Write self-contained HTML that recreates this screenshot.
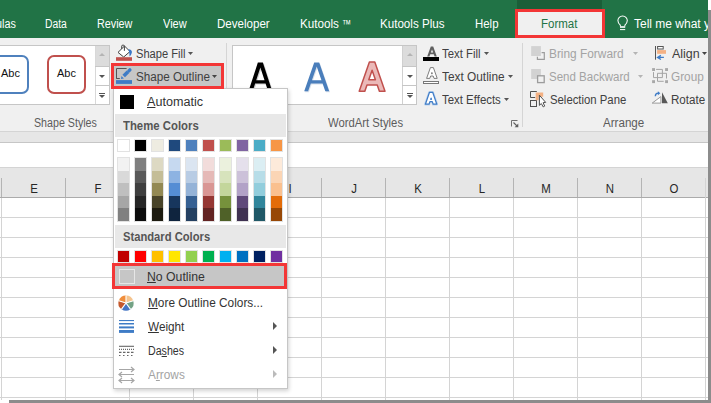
<!DOCTYPE html>
<html><head><meta charset="utf-8">
<style>
html,body{margin:0;padding:0;}
body{width:711px;height:403px;position:relative;overflow:hidden;background:#fff;font-family:"Liberation Sans",sans-serif;}
.a{position:absolute;}
.t{position:absolute;white-space:nowrap;line-height:12px;font-size:12px;transform-origin:0 0;}
.w{color:#fff;}
.d{color:#262626;}
.g{color:#9b9b9b;}
.lbl{color:#5a5a5a;}
svg{position:absolute;overflow:visible;}
</style></head><body>

<!-- ===== TAB BAR ===== -->
<div class="a" style="left:0;top:0;width:711px;height:38px;background:#217346"></div>
<div class="a" style="left:517px;top:0;width:85px;height:10px;background:#1b5e38"></div>
<span class="t w" style="left:-4.5px;top:18px;transform:scaleX(0.9)">ulas</span>
<div class="a" style="left:515px;top:9px;width:84px;height:23px;border:3px solid #f33636;background:#f0f0f0"></div>
<span class="t w" style="left:634px;top:18px">Tell me what you want to do</span>

<svg style="left:616px;top:15px" width="13" height="17">
 <path d="M4.3 11.2 L4.3 10.1 Q1.9 8.2 1.9 5.6 A4.7 4.7 0 1 1 11.3 5.6 Q11.3 8.2 8.9 10.1 L8.9 11.2" stroke="#fff" fill="none" stroke-width="1.05"/>
 <rect x="4" y="11.2" width="5.2" height="1.6" fill="#fff"/>
 <rect x="4" y="14.1" width="5.2" height="1" fill="#fff"/>
</svg>
<!-- ===== RIBBON ===== -->
<div class="a" style="left:0;top:38px;width:711px;height:93px;background:#f0f0f0"></div>


<!-- group separators -->
<div class="a" style="left:226px;top:43px;width:1px;height:84px;background:#d5d5d5"></div>
<div class="a" style="left:522px;top:43px;width:1px;height:84px;background:#d5d5d5"></div>

<!-- Shape styles gallery -->
<div class="a" style="left:-1px;top:45px;width:96px;height:58px;border:1px solid #c6c6c6;background:#fff"></div>
<div class="a" style="left:95px;top:45px;width:14px;height:58px;border:1px solid #c6c6c6;border-left:none;background:#fff"></div>
<div class="a" style="left:95px;top:46px;width:14px;height:20px;background:#dcdcdc"></div>
<div class="a" style="left:95px;top:46px;width:1px;height:58px;background:#d8d8d8"></div>
<div class="a" style="left:95px;top:66px;width:14px;height:1px;background:#c6c6c6"></div>
<div class="a" style="left:95px;top:85px;width:14px;height:1px;background:#c6c6c6"></div>
<svg style="left:95px;top:45px" width="14" height="60">
 <path d="M4 11 L7 8 L10 11 Z" fill="#b4b4b4"/>
 <path d="M4 30 L10 30 L7 33 Z" fill="#555"/>
 <rect x="4" y="48" width="6" height="1" fill="#555"/>
 <path d="M4 50 L10 50 L7 53 Z" fill="#555"/>
</svg>
<div class="a" style="left:-10px;top:55px;width:35px;height:35px;border:2px solid #4f81bd;border-radius:7px"></div>
<div class="a" style="left:47px;top:55px;width:35px;height:35px;border:2px solid #c0504d;border-radius:7px"></div>
<span class="t" style="left:1px;top:67px;font-size:11px;color:#111">Abc</span>
<span class="t" style="left:57px;top:67px;font-size:11px;color:#111">Abc</span>

<!-- Shape fill / outline -->
<svg style="left:116px;top:44px" width="18" height="18">
 <path d="M2,8.4 L8.5,2 L14,7.5 L7.7,13 Z" fill="#fff" stroke="#404040" stroke-width="1" stroke-linejoin="miter"/>
 <path d="M5.7,4.8 L5.7,2.2 Q5.7,1.2 6.7,1.2 L7.4,1.2 Q8.4,1.2 8.4,2.2 L8.4,6.8" stroke="#404040" stroke-width="1" fill="none"/>
 <path d="M12.3,5.2 Q16.3,5.6 15.9,8.6 Q15.5,11 13.5,12.6 Q13.6,10 13.1,7.8 Z" fill="#3a78c8"/>
 <rect x="0" y="13.2" width="16" height="3.6" fill="#c0504d"/>
</svg>
<svg style="left:188px;top:52px" width="6" height="4"><path d="M0 0 L5 0 L2.5 3 Z" fill="#555"/></svg>

<div class="a" style="left:111px;top:63px;width:107px;height:20px;border:3px solid #f33636;background:#c6c6c6"></div>
<svg style="left:116px;top:67px" width="17" height="18">
 <path d="M0.5 11.8 L0.5 1.5 L10.6 1.5" stroke="#555" stroke-width="1" fill="none"/>
 <path d="M0.5 11.5 L3.8 11.5" stroke="#555" stroke-width="1" fill="none"/>
 <path d="M7.7 9.1 L12.0 4.8" stroke="#3f7cc6" stroke-width="3.6" fill="none"/>
 <path d="M12.9 3.9 L13.9 2.9" stroke="#3f7cc6" stroke-width="3.4" stroke-linecap="round" fill="none"/>
 <path d="M5.5 9.0 L7.9 11.4 L4.9 12.1 Z" fill="#3f7cc6"/>
 <rect x="0" y="13.1" width="16" height="3.8" fill="#3f7cc6"/>
</svg>
<svg style="left:212px;top:75px" width="6" height="4"><path d="M0 0 L5 0 L2.5 3 Z" fill="#444"/></svg>

<!-- WordArt gallery -->
<div class="a" style="left:232px;top:45px;width:169px;height:58px;border:1px solid #c6c6c6;background:#fff"></div>
<div class="a" style="left:402px;top:45px;width:14px;height:58px;border:1px solid #c6c6c6;border-left:none;background:#fff"></div>
<div class="a" style="left:402px;top:46px;width:14px;height:20px;background:#dcdcdc"></div>
<div class="a" style="left:402px;top:46px;width:1px;height:58px;background:#d0d0d0"></div>
<div class="a" style="left:402px;top:66px;width:14px;height:1px;background:#c6c6c6"></div>
<div class="a" style="left:402px;top:85px;width:14px;height:1px;background:#c6c6c6"></div>
<svg style="left:403px;top:45px" width="14" height="60">
 <path d="M4 11 L7 8 L10 11 Z" fill="#b4b4b4"/>
 <path d="M4 30 L10 30 L7 33 Z" fill="#555"/>
 <rect x="4" y="48" width="6" height="1" fill="#555"/>
 <path d="M4 50 L10 50 L7 53 Z" fill="#555"/>
</svg>
<svg style="left:0;top:0" width="711" height="110">
 <path fill-rule="evenodd" d="M248.50,91.30 L257.85,62.60 L262.85,62.60 L272.20,91.30 L268.10,91.30 L265.56,83.50 L255.14,83.50 L252.60,91.30 Z M256.18,80.30 L260.35,67.51 L264.52,80.30 Z" fill="#777" opacity="0.35" transform="translate(1,1)"/>
 <path fill-rule="evenodd" d="M248.50,91.30 L257.85,62.60 L262.85,62.60 L272.20,91.30 L268.10,91.30 L265.56,83.50 L255.14,83.50 L252.60,91.30 Z M256.18,80.30 L260.35,67.51 L264.52,80.30 Z" fill="#000"/>
 <path fill-rule="evenodd" d="M304.20,91.30 L314.20,62.60 L319.20,62.60 L329.20,91.30 L325.30,91.30 L322.58,83.50 L310.82,83.50 L308.10,91.30 Z M311.93,80.30 L316.70,66.62 L321.47,80.30 Z" fill="#9fb3cc" opacity="0.4" transform="translate(0.8,0.9)"/>
 <path fill-rule="evenodd" d="M304.20,91.30 L314.20,62.60 L319.20,62.60 L329.20,91.30 L325.30,91.30 L322.58,83.50 L310.82,83.50 L308.10,91.30 Z M311.93,80.30 L316.70,66.62 L321.47,80.30 Z" fill="#4a7ebb"/>
 <path fill-rule="evenodd" d="M359.20,91.30 L369.40,62.00 L374.80,62.00 L385.00,91.30 L379.40,91.30 L377.21,85.00 L366.99,85.00 L364.80,91.30 Z M368.80,79.80 L372.10,70.33 L375.40,79.80 Z" fill="#ebb9b8" stroke="#c0504d" stroke-width="1.5" stroke-linejoin="round"/>
</svg>

<!-- Text fill etc -->
<svg style="left:0;top:0" width="460" height="110"><path fill-rule="evenodd" d="M427.20,56.60 L430.80,46.60 L433.20,46.60 L436.80,56.60 L434.60,56.60 L433.74,54.20 L430.26,54.20 L429.40,56.60 Z M430.84,52.60 L432.00,49.38 L433.16,52.60 Z" fill="#606060"/><path fill-rule="evenodd" d="M426.60,78.40 L430.40,67.60 L433.40,67.60 L437.20,78.40 L434.00,78.40 L433.16,76.00 L430.64,76.00 L429.80,78.40 Z M431.42,73.80 L431.90,72.43 L432.38,73.80 Z" fill="#fff" stroke="#707070" stroke-width="0.9" stroke-linejoin="round"/><path fill-rule="evenodd" d="M425.40,104.20 L429.50,92.30 L432.70,92.30 L436.80,104.20 L433.20,104.20 L432.30,101.60 L429.90,101.60 L429.00,104.20 Z M430.69,99.30 L431.10,98.10 L431.51,99.30 Z" fill="none" stroke="#bcd3ee" stroke-width="2.6" stroke-linejoin="round"/><path fill-rule="evenodd" d="M425.40,104.20 L429.50,92.30 L432.70,92.30 L436.80,104.20 L433.20,104.20 L432.30,101.60 L429.90,101.60 L429.00,104.20 Z M430.69,99.30 L431.10,98.10 L431.51,99.30 Z" fill="#fff" stroke="#3f7cc6" stroke-width="1.2" stroke-linejoin="round"/></svg>
<div class="a" style="left:423px;top:57.2px;width:16px;height:3.8px;background:#000"></div>
<svg style="left:484px;top:52px" width="6" height="4"><path d="M0 0 L5 0 L2.5 3 Z" fill="#555"/></svg>
<div class="a" style="left:423px;top:80.5px;width:14px;height:1.6px;border:1px solid #777;background:#fff"></div>
<svg style="left:508px;top:75px" width="6" height="4"><path d="M0 0 L5 0 L2.5 3 Z" fill="#555"/></svg>
<svg style="left:504px;top:98px" width="6" height="4"><path d="M0 0 L5 0 L2.5 3 Z" fill="#555"/></svg>
<svg style="left:510px;top:119px" width="10" height="10"><path d="M1.5 7.5 L1.5 1.5 L7.5 1.5" stroke="#707070" stroke-width="1" fill="none"/><path d="M3.5 3.5 L7 7" stroke="#606060" stroke-width="1.1"/><path d="M8.3 4.6 L8.3 8.3 L4.6 8.3 Z" fill="#606060"/></svg>

<!-- Arrange -->
<svg style="left:530px;top:45px" width="18" height="17">
 <rect x="1.2" y="1.1" width="9.7" height="9.9" fill="#d2d2d2"/>
 <path d="M11.6 7.6 L14.3 7.6 L14.3 14.3 L7.4 14.3 L7.4 11.8" stroke="#9c9c9c" stroke-width="1.2" fill="none"/>
</svg>
<svg style="left:633px;top:52px" width="6" height="4"><path d="M0 0 L5 0 L2.5 3 Z" fill="#b4b4b4"/></svg>
<svg style="left:530px;top:68px" width="18" height="17">
 <rect x="1.2" y="1" width="9.7" height="10" fill="#d2d2d2"/>
 <rect x="7.6" y="7.8" width="6.6" height="6.8" stroke="#9c9c9c" stroke-width="1.3" fill="#f0f0f0"/>
</svg>
<svg style="left:638px;top:75px" width="6" height="4"><path d="M0 0 L5 0 L2.5 3 Z" fill="#b4b4b4"/></svg>
<svg style="left:529px;top:90px" width="18" height="18">
 <path d="M7.8 1.5 L1.5 1.5 L1.5 7.5 L6.2 7.5" stroke="#505050" stroke-width="1" fill="none"/>
 <rect x="1.5" y="10.5" width="6" height="6" stroke="#505050" stroke-width="1" fill="none"/>
 <path d="M6.7 2.6 L14.2 2.6 L14.2 6.8 L9.6 6.8 L9.6 10.3 L6.7 10.3 Z" fill="#f4b183"/>
 <path d="M10.4 5.2 L10.4 15.4 L12.3 13.5 L14.2 16.9 L15.7 16.1 L14.1 12.7 L16.7 12.4 Z" fill="#fff" stroke="#505050" stroke-width="1" stroke-linejoin="round"/>
</svg>

<svg style="left:652px;top:45px" width="18" height="17">
 <path d="M3.5 1 L3.5 14.7" stroke="#555" stroke-width="1"/>
 <rect x="5.6" y="1.5" width="5.6" height="2.5" stroke="#555" stroke-width="1" fill="#fff"/>
 <rect x="5.1" y="5.1" width="8.9" height="3.7" fill="#f4b183"/>
 <path d="M5.6 12.4 L11.9 12.4 M8.9 10.3 L5.6 12.4 L8.9 14.5" stroke="#3f7cc6" stroke-width="1.4" fill="none"/>
</svg>
<svg style="left:702px;top:52px" width="6" height="4"><path d="M0 0 L5 0 L2.5 3 Z" fill="#444"/></svg>
<svg style="left:651px;top:67px" width="18" height="17">
 <rect x="1.1" y="1.1" width="2.9" height="2.9" fill="#a8a8a8"/><rect x="14.1" y="1.1" width="2.9" height="2.9" fill="#a8a8a8"/>
 <rect x="1.1" y="13.2" width="2.9" height="2.9" fill="#a8a8a8"/><rect x="14.1" y="13.2" width="2.9" height="2.9" fill="#a8a8a8"/>
 <path d="M5.1 2.4 H11.4 V10.6 M2.5 5.1 V10.6 H11.4 M6.5 14.3 V6.3 H15.5 V11.5 M6.5 14.3 H12.7" stroke="#a4a4a4" stroke-width="1" fill="none"/>
</svg>
<svg style="left:651px;top:90px" width="18" height="16">
 <path d="M1.2 13.1 L9.9 6.6 L9.9 13.1 Z" stroke="#9a9a9a" stroke-width="1" fill="#fff" stroke-linejoin="round"/>
 <path d="M11 13.2 L11 2.3 L16.8 13.2 Z" fill="#585858"/>
 <path d="M4.3 6.3 Q4.3 3.4 7.2 3.2" stroke="#3f7cc6" stroke-width="1.3" fill="none"/>
 <path d="M6.9 1.2 L9.3 3.2 L6.9 5.2 Z" fill="#3f7cc6"/>
</svg>

<!-- below ribbon -->
<div class="a" style="left:0;top:131px;width:711px;height:1px;background:#d4d4d4"></div>
<div class="a" style="left:0;top:132px;width:711px;height:10px;background:#e6e6e6"></div>
<div class="a" style="left:0;top:142px;width:711px;height:1px;background:#c6c6c6"></div>
<div class="a" style="left:0;top:143px;width:711px;height:24px;background:#fff"></div>
<div class="a" style="left:0;top:167px;width:711px;height:1px;background:#d4d4d4"></div>
<div class="a" style="left:0;top:168px;width:711px;height:29px;background:#e6e6e6"></div>
<div class="a" style="left:0;top:197px;width:711px;height:1px;background:#ababab"></div>
<div class="a" style="left:1px;top:178px;width:1px;height:19px;background:#b4b4b4"></div>
<span class="t d" style="left:2px;width:64px;text-align:center;top:182px;font-size:13px;line-height:13px;transform:scaleX(0.88);transform-origin:50% 0">E</span>
<div class="a" style="left:1px;top:198px;width:1px;height:202px;background:#d4d4d4"></div>
<div class="a" style="left:65px;top:178px;width:1px;height:19px;background:#b4b4b4"></div>
<span class="t d" style="left:66px;width:64px;text-align:center;top:182px;font-size:13px;line-height:13px;transform:scaleX(0.88);transform-origin:50% 0">F</span>
<div class="a" style="left:65px;top:198px;width:1px;height:202px;background:#d4d4d4"></div>
<div class="a" style="left:129px;top:178px;width:1px;height:19px;background:#b4b4b4"></div>
<span class="t d" style="left:130px;width:64px;text-align:center;top:182px;font-size:13px;line-height:13px;transform:scaleX(0.88);transform-origin:50% 0">G</span>
<div class="a" style="left:129px;top:198px;width:1px;height:202px;background:#d4d4d4"></div>
<div class="a" style="left:193px;top:178px;width:1px;height:19px;background:#b4b4b4"></div>
<span class="t d" style="left:194px;width:64px;text-align:center;top:182px;font-size:13px;line-height:13px;transform:scaleX(0.88);transform-origin:50% 0">H</span>
<div class="a" style="left:193px;top:198px;width:1px;height:202px;background:#d4d4d4"></div>
<div class="a" style="left:257px;top:178px;width:1px;height:19px;background:#b4b4b4"></div>
<span class="t d" style="left:258px;width:64px;text-align:center;top:182px;font-size:13px;line-height:13px;transform:scaleX(0.88);transform-origin:50% 0">I</span>
<div class="a" style="left:257px;top:198px;width:1px;height:202px;background:#d4d4d4"></div>
<div class="a" style="left:321px;top:178px;width:1px;height:19px;background:#b4b4b4"></div>
<span class="t d" style="left:322px;width:64px;text-align:center;top:182px;font-size:13px;line-height:13px;transform:scaleX(0.88);transform-origin:50% 0">J</span>
<div class="a" style="left:321px;top:198px;width:1px;height:202px;background:#d4d4d4"></div>
<div class="a" style="left:385px;top:178px;width:1px;height:19px;background:#b4b4b4"></div>
<span class="t d" style="left:386px;width:64px;text-align:center;top:182px;font-size:13px;line-height:13px;transform:scaleX(0.88);transform-origin:50% 0">K</span>
<div class="a" style="left:385px;top:198px;width:1px;height:202px;background:#d4d4d4"></div>
<div class="a" style="left:449px;top:178px;width:1px;height:19px;background:#b4b4b4"></div>
<span class="t d" style="left:450px;width:64px;text-align:center;top:182px;font-size:13px;line-height:13px;transform:scaleX(0.88);transform-origin:50% 0">L</span>
<div class="a" style="left:449px;top:198px;width:1px;height:202px;background:#d4d4d4"></div>
<div class="a" style="left:513px;top:178px;width:1px;height:19px;background:#b4b4b4"></div>
<span class="t d" style="left:514px;width:64px;text-align:center;top:182px;font-size:13px;line-height:13px;transform:scaleX(0.88);transform-origin:50% 0">M</span>
<div class="a" style="left:513px;top:198px;width:1px;height:202px;background:#d4d4d4"></div>
<div class="a" style="left:577px;top:178px;width:1px;height:19px;background:#b4b4b4"></div>
<span class="t d" style="left:578px;width:64px;text-align:center;top:182px;font-size:13px;line-height:13px;transform:scaleX(0.88);transform-origin:50% 0">N</span>
<div class="a" style="left:577px;top:198px;width:1px;height:202px;background:#d4d4d4"></div>
<div class="a" style="left:641px;top:178px;width:1px;height:19px;background:#b4b4b4"></div>
<span class="t d" style="left:642px;width:64px;text-align:center;top:182px;font-size:13px;line-height:13px;transform:scaleX(0.88);transform-origin:50% 0">O</span>
<div class="a" style="left:641px;top:198px;width:1px;height:202px;background:#d4d4d4"></div>
<div class="a" style="left:705px;top:178px;width:1px;height:222px;background:#d4d4d4"></div>
<div class="a" style="left:0;top:217px;width:708px;height:1px;background:#d4d4d4"></div>
<div class="a" style="left:0;top:237px;width:708px;height:1px;background:#d4d4d4"></div>
<div class="a" style="left:0;top:257px;width:708px;height:1px;background:#d4d4d4"></div>
<div class="a" style="left:0;top:277px;width:708px;height:1px;background:#d4d4d4"></div>
<div class="a" style="left:0;top:297px;width:708px;height:1px;background:#d4d4d4"></div>
<div class="a" style="left:0;top:317px;width:708px;height:1px;background:#d4d4d4"></div>
<div class="a" style="left:0;top:337px;width:708px;height:1px;background:#d4d4d4"></div>
<div class="a" style="left:0;top:357px;width:708px;height:1px;background:#d4d4d4"></div>
<div class="a" style="left:0;top:377px;width:708px;height:1px;background:#d4d4d4"></div>
<div class="a" style="left:0;top:397px;width:708px;height:1px;background:#d4d4d4"></div>


<!-- ===== MENU ===== -->
<div class="a" style="left:113px;top:88px;width:173px;height:299px;border:1px solid #c6c6c6;background:#fff;box-shadow:1px 2px 4px rgba(0,0,0,0.18)"></div>
<div class="a" style="left:120px;top:95px;width:14px;height:14px;background:#000"></div>
<div class="a" style="left:115px;top:114px;width:171px;height:23px;background:#e8e8e8"></div>
<div class="a" style="left:115px;top:225px;width:171px;height:23px;background:#e8e8e8"></div>
<div class="a" style="left:117px;top:139px;width:11px;height:11px;border:1px solid #e2e2e2;background:#FFFFFF"></div>
<div class="a" style="left:117px;top:157px;width:11px;height:63px;border:1px solid #e2e2e2"></div>
<div class="a" style="left:118px;top:158.0px;width:11px;height:12.6px;background:#F2F2F2"></div>
<div class="a" style="left:118px;top:170.6px;width:11px;height:12.6px;background:#D9D9D9"></div>
<div class="a" style="left:118px;top:183.2px;width:11px;height:12.6px;background:#BFBFBF"></div>
<div class="a" style="left:118px;top:195.8px;width:11px;height:12.6px;background:#A6A6A6"></div>
<div class="a" style="left:118px;top:208.4px;width:11px;height:12.6px;background:#808080"></div>
<div class="a" style="left:134px;top:139px;width:11px;height:11px;border:1px solid #e2e2e2;background:#000000"></div>
<div class="a" style="left:134px;top:157px;width:11px;height:63px;border:1px solid #e2e2e2"></div>
<div class="a" style="left:135px;top:158.0px;width:11px;height:12.6px;background:#7F7F7F"></div>
<div class="a" style="left:135px;top:170.6px;width:11px;height:12.6px;background:#595959"></div>
<div class="a" style="left:135px;top:183.2px;width:11px;height:12.6px;background:#3F3F3F"></div>
<div class="a" style="left:135px;top:195.8px;width:11px;height:12.6px;background:#262626"></div>
<div class="a" style="left:135px;top:208.4px;width:11px;height:12.6px;background:#0C0C0C"></div>
<div class="a" style="left:151px;top:139px;width:11px;height:11px;border:1px solid #e2e2e2;background:#EEECE1"></div>
<div class="a" style="left:151px;top:157px;width:11px;height:63px;border:1px solid #e2e2e2"></div>
<div class="a" style="left:152px;top:158.0px;width:11px;height:12.6px;background:#DDD9C3"></div>
<div class="a" style="left:152px;top:170.6px;width:11px;height:12.6px;background:#C4BD97"></div>
<div class="a" style="left:152px;top:183.2px;width:11px;height:12.6px;background:#938953"></div>
<div class="a" style="left:152px;top:195.8px;width:11px;height:12.6px;background:#494429"></div>
<div class="a" style="left:152px;top:208.4px;width:11px;height:12.6px;background:#1D1B10"></div>
<div class="a" style="left:168px;top:139px;width:11px;height:11px;border:1px solid #e2e2e2;background:#1F497D"></div>
<div class="a" style="left:168px;top:157px;width:11px;height:63px;border:1px solid #e2e2e2"></div>
<div class="a" style="left:169px;top:158.0px;width:11px;height:12.6px;background:#C6D9F0"></div>
<div class="a" style="left:169px;top:170.6px;width:11px;height:12.6px;background:#8DB3E2"></div>
<div class="a" style="left:169px;top:183.2px;width:11px;height:12.6px;background:#548DD4"></div>
<div class="a" style="left:169px;top:195.8px;width:11px;height:12.6px;background:#17365D"></div>
<div class="a" style="left:169px;top:208.4px;width:11px;height:12.6px;background:#0F243E"></div>
<div class="a" style="left:185px;top:139px;width:11px;height:11px;border:1px solid #e2e2e2;background:#4F81BD"></div>
<div class="a" style="left:185px;top:157px;width:11px;height:63px;border:1px solid #e2e2e2"></div>
<div class="a" style="left:186px;top:158.0px;width:11px;height:12.6px;background:#DBE5F1"></div>
<div class="a" style="left:186px;top:170.6px;width:11px;height:12.6px;background:#B8CCE4"></div>
<div class="a" style="left:186px;top:183.2px;width:11px;height:12.6px;background:#95B3D7"></div>
<div class="a" style="left:186px;top:195.8px;width:11px;height:12.6px;background:#366092"></div>
<div class="a" style="left:186px;top:208.4px;width:11px;height:12.6px;background:#244061"></div>
<div class="a" style="left:202px;top:139px;width:11px;height:11px;border:1px solid #e2e2e2;background:#C0504D"></div>
<div class="a" style="left:202px;top:157px;width:11px;height:63px;border:1px solid #e2e2e2"></div>
<div class="a" style="left:203px;top:158.0px;width:11px;height:12.6px;background:#F2DCDB"></div>
<div class="a" style="left:203px;top:170.6px;width:11px;height:12.6px;background:#E5B9B7"></div>
<div class="a" style="left:203px;top:183.2px;width:11px;height:12.6px;background:#D99694"></div>
<div class="a" style="left:203px;top:195.8px;width:11px;height:12.6px;background:#953734"></div>
<div class="a" style="left:203px;top:208.4px;width:11px;height:12.6px;background:#632423"></div>
<div class="a" style="left:219px;top:139px;width:11px;height:11px;border:1px solid #e2e2e2;background:#9BBB59"></div>
<div class="a" style="left:219px;top:157px;width:11px;height:63px;border:1px solid #e2e2e2"></div>
<div class="a" style="left:220px;top:158.0px;width:11px;height:12.6px;background:#EBF1DD"></div>
<div class="a" style="left:220px;top:170.6px;width:11px;height:12.6px;background:#D7E3BC"></div>
<div class="a" style="left:220px;top:183.2px;width:11px;height:12.6px;background:#C3D69B"></div>
<div class="a" style="left:220px;top:195.8px;width:11px;height:12.6px;background:#76923C"></div>
<div class="a" style="left:220px;top:208.4px;width:11px;height:12.6px;background:#4F6128"></div>
<div class="a" style="left:236px;top:139px;width:11px;height:11px;border:1px solid #e2e2e2;background:#8064A2"></div>
<div class="a" style="left:236px;top:157px;width:11px;height:63px;border:1px solid #e2e2e2"></div>
<div class="a" style="left:237px;top:158.0px;width:11px;height:12.6px;background:#E5E0EC"></div>
<div class="a" style="left:237px;top:170.6px;width:11px;height:12.6px;background:#CCC1D9"></div>
<div class="a" style="left:237px;top:183.2px;width:11px;height:12.6px;background:#B2A2C7"></div>
<div class="a" style="left:237px;top:195.8px;width:11px;height:12.6px;background:#5F497A"></div>
<div class="a" style="left:237px;top:208.4px;width:11px;height:12.6px;background:#3F3151"></div>
<div class="a" style="left:253px;top:139px;width:11px;height:11px;border:1px solid #e2e2e2;background:#4BACC6"></div>
<div class="a" style="left:253px;top:157px;width:11px;height:63px;border:1px solid #e2e2e2"></div>
<div class="a" style="left:254px;top:158.0px;width:11px;height:12.6px;background:#DBEEF3"></div>
<div class="a" style="left:254px;top:170.6px;width:11px;height:12.6px;background:#B7DDE8"></div>
<div class="a" style="left:254px;top:183.2px;width:11px;height:12.6px;background:#92CDDC"></div>
<div class="a" style="left:254px;top:195.8px;width:11px;height:12.6px;background:#31859B"></div>
<div class="a" style="left:254px;top:208.4px;width:11px;height:12.6px;background:#205867"></div>
<div class="a" style="left:270px;top:139px;width:11px;height:11px;border:1px solid #e2e2e2;background:#F79646"></div>
<div class="a" style="left:270px;top:157px;width:11px;height:63px;border:1px solid #e2e2e2"></div>
<div class="a" style="left:271px;top:158.0px;width:11px;height:12.6px;background:#FDEADA"></div>
<div class="a" style="left:271px;top:170.6px;width:11px;height:12.6px;background:#FBD5B5"></div>
<div class="a" style="left:271px;top:183.2px;width:11px;height:12.6px;background:#FAC08F"></div>
<div class="a" style="left:271px;top:195.8px;width:11px;height:12.6px;background:#E36C09"></div>
<div class="a" style="left:271px;top:208.4px;width:11px;height:12.6px;background:#974806"></div>
<div class="a" style="left:117px;top:250px;width:11px;height:11px;border:1px solid #e2e2e2;background:#C00000"></div>
<div class="a" style="left:134px;top:250px;width:11px;height:11px;border:1px solid #e2e2e2;background:#FF0000"></div>
<div class="a" style="left:151px;top:250px;width:11px;height:11px;border:1px solid #e2e2e2;background:#FFC000"></div>
<div class="a" style="left:168px;top:250px;width:11px;height:11px;border:1px solid #e2e2e2;background:#FFE600"></div>
<div class="a" style="left:185px;top:250px;width:11px;height:11px;border:1px solid #e2e2e2;background:#92D050"></div>
<div class="a" style="left:202px;top:250px;width:11px;height:11px;border:1px solid #e2e2e2;background:#00B050"></div>
<div class="a" style="left:219px;top:250px;width:11px;height:11px;border:1px solid #e2e2e2;background:#00B0F0"></div>
<div class="a" style="left:236px;top:250px;width:11px;height:11px;border:1px solid #e2e2e2;background:#0070C0"></div>
<div class="a" style="left:253px;top:250px;width:11px;height:11px;border:1px solid #e2e2e2;background:#002060"></div>
<div class="a" style="left:270px;top:250px;width:11px;height:11px;border:1px solid #e2e2e2;background:#7030A0"></div>

<div class="a" style="left:112px;top:263px;width:169px;height:20px;border:3px solid #f33636;background:#c6c6c6"></div>
<div class="a" style="left:119px;top:269px;width:14px;height:13px;border:1px solid #e6e6e6;background:#c6c6c6"></div>

<svg style="left:118px;top:294.5px" width="16" height="16">
 <path d="M8 8 L8.00 0.40 A7.6 7.6 0 0 1 15.23 5.65 Z" fill="#f5c48e"/>
 <path d="M8 8 L15.23 5.65 A7.6 7.6 0 0 1 12.47 14.15 Z" fill="#73a285"/>
 <path d="M8 8 L12.47 14.15 A7.6 7.6 0 0 1 3.53 14.15 Z" fill="#4576c4"/>
 <path d="M8 8 L3.53 14.15 A7.6 7.6 0 0 1 0.77 5.65 Z" fill="#c4582c"/>
 <path d="M8 8 L0.77 5.65 A7.6 7.6 0 0 1 8.00 0.40 Z" fill="#f08e3c"/>
 <path d="M8 8 L8.00 0.40" stroke="#fff" stroke-width="1.1"/>
 <path d="M8 8 L15.23 5.65" stroke="#fff" stroke-width="1.1"/>
 <path d="M8 8 L12.47 14.15" stroke="#fff" stroke-width="1.1"/>
 <path d="M8 8 L3.53 14.15" stroke="#fff" stroke-width="1.1"/>
 <path d="M8 8 L0.77 5.65" stroke="#fff" stroke-width="1.1"/>
</svg>

<svg style="left:119px;top:319px" width="16" height="15">
 <rect x="0" y="1" width="15" height="1.1" fill="#3f7cc6"/>
 <rect x="0" y="4" width="15" height="1.5" fill="#3f7cc6"/>
 <rect x="0" y="7.4" width="15" height="2" fill="#3f7cc6"/>
 <rect x="0" y="11" width="15" height="2.9" fill="#3f7cc6"/>
</svg>
<svg style="left:273px;top:322px" width="5" height="9"><path d="M0 0 L4 4 L0 8 Z" fill="#555"/></svg>

<svg style="left:119px;top:345px" width="16" height="12">
 <path d="M0 1.3 L15 1.3" stroke="#666" stroke-width="1.1"/>
 <path d="M0 4.4 L15 4.4" stroke="#666" stroke-width="1.1" stroke-dasharray="1 1"/>
 <path d="M0 7.4 L15 7.4" stroke="#666" stroke-width="1.1" stroke-dasharray="2.5 1.5"/>
 <path d="M0 10.5 L15 10.5" stroke="#666" stroke-width="1.1" stroke-dasharray="1.5 2.5"/>
</svg>
<svg style="left:273px;top:346px" width="5" height="9"><path d="M0 0 L4 4 L0 8 Z" fill="#555"/></svg>

<svg style="left:118px;top:366px" width="18" height="17">
 <path d="M1 3.5 L16 3.5 M13 1 L16 3.5 L13 6" stroke="#a6a6a6" stroke-width="1.2" fill="none"/>
 <path d="M1 8.5 L16 8.5 M4 6 L1 8.5 L4 11" stroke="#a6a6a6" stroke-width="1.2" fill="none"/>
 <path d="M1 14.5 L16 14.5 M4 12 L1 14.5 L4 17 M13 12 L16 14.5 L13 17" stroke="#a6a6a6" stroke-width="1.2" fill="none"/>
</svg>
<svg style="left:273px;top:370px" width="5" height="9"><path d="M0 0 L4 4 L0 8 Z" fill="#bbb"/></svg>

<div class="a" style="left:111px;top:86px;width:113px;height:3px;background:#f33636"></div>
<span class="t" id="tab_data" style="left:45.04px;top:18px;font-size:12px;line-height:12px;color:#fff;transform:scaleX(0.8621);">Data</span>
<span class="t" id="tab_review" style="left:97.05px;top:18px;font-size:12px;line-height:12px;color:#fff;transform:scaleX(0.8981);">Review</span>
<span class="t" id="tab_view" style="left:163.47px;top:18px;font-size:12px;line-height:12px;color:#fff;transform:scaleX(0.9189);">View</span>
<span class="t" id="tab_dev" style="left:217.00px;top:18px;font-size:12px;line-height:12px;color:#fff;transform:scaleX(0.9636);">Developer</span>
<span class="t" id="tab_kut" style="left:299.60px;top:18px;font-size:12px;line-height:12px;color:#fff;transform:scaleX(0.9724);">Kutools</span>
<span class="t" id="tab_tm" style="left:341.70px;top:18px;font-size:12px;line-height:12px;color:#fff;transform:scaleX(0.7500);">™</span>
<span class="t" id="tab_kutp" style="left:380.02px;top:18px;font-size:12px;line-height:12px;color:#fff;transform:scaleX(0.9668);">Kutools Plus</span>
<span class="t" id="tab_help" style="left:475.02px;top:18px;font-size:12px;line-height:12px;color:#fff;transform:scaleX(0.9524);">Help</span>
<span class="t" id="tab_format" style="left:541.02px;top:18px;font-size:12px;line-height:12px;color:#217346;transform:scaleX(0.9584);">Format</span>
<span class="t" id="shape_fill" style="left:135.56px;top:48px;font-size:12px;line-height:12px;color:#404040;transform:scaleX(0.9274);">Shape Fill</span>
<span class="t" id="shape_outline" style="left:135.52px;top:71px;font-size:12px;line-height:12px;color:#404040;transform:scaleX(0.9734);">Shape Outline</span>
<span class="t" id="text_fill" style="left:442.45px;top:48px;font-size:12px;line-height:12px;color:#404040;transform:scaleX(0.9471);">Text Fill</span>
<span class="t" id="text_outline" style="left:442.49px;top:71px;font-size:12px;line-height:12px;color:#404040;transform:scaleX(0.9876);">Text Outline</span>
<span class="t" id="text_effects" style="left:442.47px;top:94px;font-size:12px;line-height:12px;color:#404040;transform:scaleX(0.9518);">Text Effects</span>
<span class="t" id="bring_fwd" style="left:549.01px;top:48px;font-size:12px;line-height:12px;color:#a3a3a3;transform:scaleX(0.9893);">Bring Forward</span>
<span class="t" id="send_back" style="left:548.52px;top:71px;font-size:12px;line-height:12px;color:#a3a3a3;transform:scaleX(0.9591);">Send Backward</span>
<span class="t" id="sel_pane" style="left:549.53px;top:94px;font-size:12px;line-height:12px;color:#404040;transform:scaleX(0.9451);">Selection Pane</span>
<span class="t" id="align" style="left:671.50px;top:48px;font-size:12px;line-height:12px;color:#404040;transform:scaleX(1.0385);">Align</span>
<span class="t" id="group" style="left:671.00px;top:71px;font-size:12px;line-height:12px;color:#a3a3a3;transform:scaleX(0.9819);">Group</span>
<span class="t" id="rotate" style="left:671.01px;top:94px;font-size:12px;line-height:12px;color:#404040;transform:scaleX(0.9660);">Rotate</span>
<span class="t" id="lbl_shape" style="left:33.57px;top:117px;font-size:12px;line-height:12px;color:#5c5c5c;transform:scaleX(0.8888);">Shape Styles</span>
<span class="t" id="lbl_wordart" style="left:327.99px;top:117px;font-size:12px;line-height:12px;color:#5c5c5c;transform:scaleX(0.9401);">WordArt Styles</span>
<span class="t" id="lbl_arrange" style="left:603.00px;top:117px;font-size:12px;line-height:12px;color:#5c5c5c;transform:scaleX(0.9667);">Arrange</span>
<span class="t" id="m_auto" style="left:147.00px;top:96px;font-size:12px;line-height:12px;color:#333;transform:scaleX(1.0491);"><u>A</u>utomatic</span>
<span class="t" id="m_theme" style="left:123.46px;top:120px;font-size:12px;line-height:12px;color:#555;transform:scaleX(0.9460);font-weight:bold;">Theme Colors</span>
<span class="t" id="m_std" style="left:122.98px;top:231px;font-size:12px;line-height:12px;color:#555;transform:scaleX(0.9334);font-weight:bold;">Standard Colors</span>
<span class="t" id="m_nool" style="left:147.00px;top:271px;font-size:12px;line-height:12px;color:#333;transform:scaleX(1.0212);"><u>N</u>o Outline</span>
<span class="t" id="m_more" style="left:147.99px;top:297px;font-size:12px;line-height:12px;color:#333;transform:scaleX(0.9864);"><u>M</u>ore Outline Colors...</span>
<span class="t" id="m_weight" style="left:147.98px;top:321px;font-size:12px;line-height:12px;color:#333;transform:scaleX(0.9793);"><u>W</u>eight</span>
<span class="t" id="m_dashes" style="left:148.03px;top:345px;font-size:12px;line-height:12px;color:#333;transform:scaleX(0.8854);">Da<u>s</u>hes</span>
<span class="t" id="m_arrows" style="left:147.98px;top:369px;font-size:12px;line-height:12px;color:#a3a3a3;transform:scaleX(0.9853);">A<u>r</u>rows</span>
<!-- right border -->
<div class="a" style="left:708px;top:0;width:3px;height:10px;background:#fff"></div>
<div class="a" style="left:708px;top:10px;width:3px;height:393px;background:#8c8c8c"></div>
<div class="a" style="left:0;top:400px;width:9px;height:3px;background:#fff"></div>
<div class="a" style="left:9px;top:400px;width:702px;height:3px;background:#8c8c8c"></div>

</body></html>
